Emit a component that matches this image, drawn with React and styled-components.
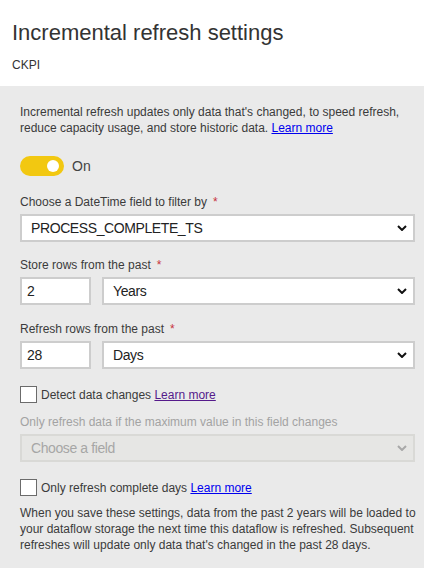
import * as React from "react";
import styled, { createGlobalStyle } from "styled-components";

const GlobalStyle = createGlobalStyle`
  html, body {
    margin: 0;
    padding: 0;
    background: #eaeaea;
  }
  body {
    font-family: "Liberation Sans", Arial, sans-serif;
    color: #333333;
  }
`;

const Page = styled.div`
  width: 424px;
  min-height: 100vh;
  display: flex;
  flex-direction: column;
  background: #eaeaea;
`;

const Header = styled.header`
  background: #ffffff;
  padding: 20px 12px 13px;
  display: flex;
  flex-direction: column;
  gap: 11px;
`;

const Title = styled.h1`
  margin: 0;
  font-size: 22px;
  line-height: 26px;
  font-weight: 400;
  color: #333333;
`;

const Subtitle = styled.div`
  font-size: 12px;
  line-height: 16px;
  color: #333333;
`;

const Panel = styled.main`
  flex: 1;
  padding: 18px 9px 20px 20px;
  display: flex;
  flex-direction: column;
`;

const Text = styled.p`
  margin: 0;
  font-size: 12px;
  line-height: 16px;
  color: #3b3b3b;
  width: ${(p) => p.$width || 395}px;
`;

const Link = styled.a`
  color: ${(p) => (p.$visited ? "#551a8b" : "#0000ee")};
  text-decoration: underline;
  cursor: pointer;
`;

const ToggleRow = styled.div`
  display: flex;
  align-items: center;
  gap: 8px;
  margin-top: 20px;
  font-size: 14px;
  color: #444444;
`;

const Track = styled.div`
  width: 44px;
  height: 20px;
  border-radius: 10px;
  background: #f2c811;
  display: flex;
  align-items: center;
  justify-content: flex-end;
  padding: 0 5px;
  box-sizing: border-box;
`;

const Knob = styled.span`
  width: 12px;
  height: 12px;
  border-radius: 50%;
  background: #ffffff;
`;

const Field = styled.div`
  display: flex;
  flex-direction: column;
  gap: 4px;
  margin-top: ${(p) => p.$mt || 16}px;
  width: 395px;
`;

const Label = styled.label`
  font-size: 12px;
  line-height: 16px;
  color: ${(p) => (p.$disabled ? "#a3a3a3" : "#3b3b3b")};
`;

const Required = styled.span`
  color: #c8323c;
  margin-left: 6px;
`;

const Row = styled.div`
  display: flex;
  gap: 11px;
`;

const Box = styled.div`
  height: 28px;
  flex-shrink: 0;
  box-sizing: border-box;
  border: 2px solid ${(p) => (p.$disabled ? "#d9d9d6" : "#cdcdcd")};
  background: ${(p) => (p.$disabled ? "#e6e6e4" : "#ffffff")};
  display: flex;
  align-items: center;
  font-size: 14px;
  letter-spacing: -0.4px;
  color: ${(p) => (p.$disabled ? "#a6a6a6" : "#222222")};
`;

const NumberBox = styled(Box)`
  width: 71px;
  padding: 0 5px;
`;

const SelectBox = styled(Box)`
  flex: 1 0 auto;
  justify-content: space-between;
  padding: 0 6px 0 9px;
`;

const Chevron = ({ color }) => (
  <svg width="10" height="6" viewBox="0 0 10 6">
    <path d="M1 1 L5 5 L9 1" fill="none" stroke={color} strokeWidth="2" />
  </svg>
);

const Select = ({ value, disabled }) => (
  <SelectBox $disabled={disabled}>
    <span>{value}</span>
    <Chevron color={disabled ? "#a8a8a8" : "#111"} />
  </SelectBox>
);

const CheckRow = styled.div`
  display: flex;
  align-items: center;
  gap: 4px;
  margin-top: ${(p) => p.$mt}px;
  font-size: 12px;
  line-height: 16px;
  color: #3b3b3b;
`;

const Check = styled.span`
  width: 17px;
  height: 17px;
  box-sizing: border-box;
  border: 1px solid #6b6b6b;
  background: #ffffff;
`;

const Footnote = styled(Text)`
  margin-top: 9px;
`;

export default function App() {
  return (
    <Page>
      <GlobalStyle />
      <Header>
        <Title>Incremental refresh settings</Title>
        <Subtitle>CKPI</Subtitle>
      </Header>
      <Panel>
        <Text>
          Incremental refresh updates only data that's changed, to speed refresh,
          reduce capacity usage, and store historic data. <Link>Learn more</Link>
        </Text>
        <ToggleRow>
          <Track>
            <Knob />
          </Track>
          On
        </ToggleRow>
        <Field $mt={18}>
          <Label>
            Choose a DateTime field to filter by<Required>*</Required>
          </Label>
          <Select value="PROCESS_COMPLETE_TS" />
        </Field>
        <Field $mt={15}>
          <Label>
            Store rows from the past<Required>*</Required>
          </Label>
          <Row>
            <NumberBox>2</NumberBox>
            <Select value="Years" />
          </Row>
        </Field>
        <Field $mt={16}>
          <Label>
            Refresh rows from the past<Required>*</Required>
          </Label>
          <Row>
            <NumberBox>28</NumberBox>
            <Select value="Days" />
          </Row>
        </Field>
        <CheckRow $mt={17}>
          <Check />
          <span>
            Detect data changes <Link $visited>Learn more</Link>
          </span>
        </CheckRow>
        <Field $mt={11}>
          <Label $disabled>Only refresh data if the maximum value in this field changes</Label>
          <Select value="Choose a field" disabled />
        </Field>
        <CheckRow $mt={17}>
          <Check />
          <span>
            Only refresh complete days <Link>Learn more</Link>
          </span>
        </CheckRow>
        <Footnote $width={404}>
          When you save these settings, data from the past 2 years will be loaded to
          your dataflow storage the next time this dataflow is refreshed. Subsequent
          refreshes will update only data that's changed in the past 28 days.
        </Footnote>
      </Panel>
    </Page>
  );
}
